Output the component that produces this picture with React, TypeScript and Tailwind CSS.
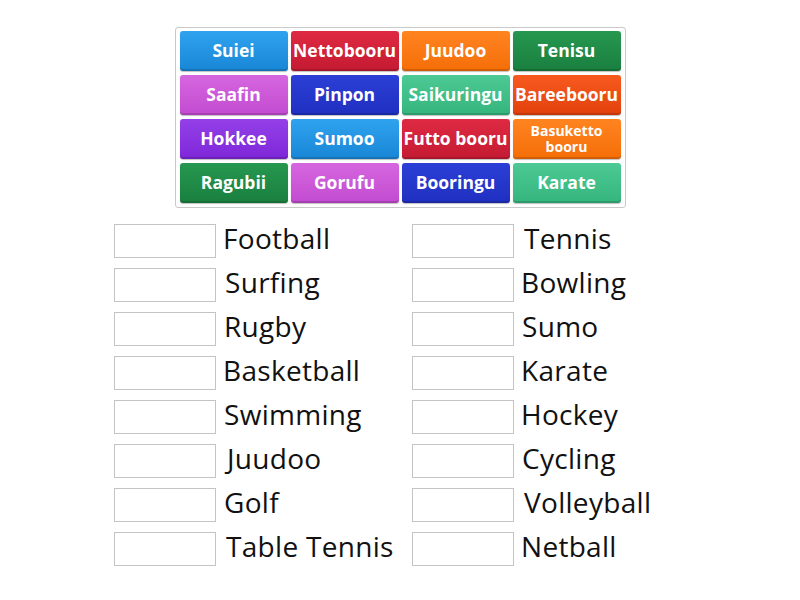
const tiles: { label: string; from: string; to: string; small?: boolean }[] = [
  { label: "Suiei", from: "from-[#2fa3ef]", to: "to-[#1886d6]" },
  { label: "Nettobooru", from: "from-[#de2a42]", to: "to-[#c41a32]" },
  { label: "Juudoo", from: "from-[#ff8420]", to: "to-[#f56e06]" },
  { label: "Tenisu", from: "from-[#26984f]", to: "to-[#1a7f3f]" },
  { label: "Saafin", from: "from-[#d666e0]", to: "to-[#c24bd0]" },
  { label: "Pinpon", from: "from-[#2c3fd6]", to: "to-[#1f2fc0]" },
  { label: "Saikuringu", from: "from-[#4cc994]", to: "to-[#35b57e]" },
  { label: "Bareebooru", from: "from-[#f75a1e]", to: "to-[#e2400a]" },
  { label: "Hokkee", from: "from-[#9440e8]", to: "to-[#7e26d8]" },
  { label: "Sumoo", from: "from-[#2fa3ef]", to: "to-[#1886d6]" },
  { label: "Futto booru", from: "from-[#de2a42]", to: "to-[#c41a32]" },
  { label: "Basuketto booru", from: "from-[#ff8420]", to: "to-[#f56e06]", small: true },
  { label: "Ragubii", from: "from-[#26984f]", to: "to-[#1a7f3f]" },
  { label: "Gorufu", from: "from-[#d666e0]", to: "to-[#c24bd0]" },
  { label: "Booringu", from: "from-[#2c3fd6]", to: "to-[#1f2fc0]" },
  { label: "Karate", from: "from-[#4cc994]", to: "to-[#35b57e]" },
];

const left: { text: string; pad: string }[] = [
  { text: "Football", pad: "pl-[7px]" },
  { text: "Surfing", pad: "pl-[9px]" },
  { text: "Rugby", pad: "pl-[8px]" },
  { text: "Basketball", pad: "pl-[7px]" },
  { text: "Swimming", pad: "pl-[8px]" },
  { text: "Juudoo", pad: "pl-[11px]" },
  { text: "Golf", pad: "pl-[8px]" },
  { text: "Table Tennis", pad: "pl-[10px]" },
];

const right: { text: string; pad: string }[] = [
  { text: "Tennis", pad: "pl-[10px]" },
  { text: "Bowling", pad: "pl-[7px]" },
  { text: "Sumo", pad: "pl-[8px]" },
  { text: "Karate", pad: "pl-[7px]" },
  { text: "Hockey", pad: "pl-[7px]" },
  { text: "Cycling", pad: "pl-[8px]" },
  { text: "Volleyball", pad: "pl-[10px]" },
  { text: "Netball", pad: "pl-[7px]" },
];

function AnswerRow({ text, pad }: { text: string; pad: string }) {
  return (
    <div className="flex h-[44px] items-start">
      <div className="h-[34px] w-[102px] shrink-0 border border-[#c4c4c4] bg-white" />
      <span className={`${pad} -mt-[5px] text-[28px] leading-[38px] tracking-[0.3px] text-[#111]`}>{text}</span>
    </div>
  );
}

export default function App() {
  return (
    <div className="h-[600px] w-[800px] bg-white font-['Open_Sans',sans-serif]">
      <div className="flex justify-center pt-[27px]">
        <div className="rounded-[3px] border border-[#c9c9c9] p-[4px] pt-[3px]">
          <div className="grid grid-cols-[repeat(4,108px)] grid-rows-[repeat(4,40px)] gap-x-[3px] gap-y-[4px]">
            {tiles.map((t) => (
              <div
                key={t.label}
                className={`flex items-center justify-center rounded-[3px] bg-gradient-to-b ${t.from} ${t.to} text-center font-bold text-white shadow-[inset_0_-2px_0_rgba(0,0,0,0.15),0_1px_1px_rgba(0,0,0,0.25)]`}
              >
                {t.small ? (
                  <span className="text-[14px] leading-[16px]">
                    Basuketto
                    <br />
                    booru
                  </span>
                ) : (
                  <span className="-mt-[2px] text-[17.5px] leading-[20px]">{t.label}</span>
                )}
              </div>
            ))}
          </div>
        </div>
      </div>
      <div className="flex pl-[114px] pt-[16px]">
        <div className="flex w-[298px] flex-col">
          {left.map((r) => (
            <AnswerRow key={r.text} {...r} />
          ))}
        </div>
        <div className="flex w-[298px] flex-col">
          {right.map((r) => (
            <AnswerRow key={r.text} {...r} />
          ))}
        </div>
      </div>
    </div>
  );
}
